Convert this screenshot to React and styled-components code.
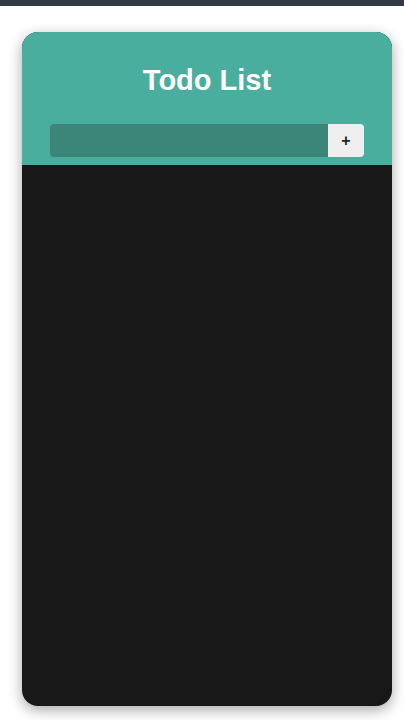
import styled, { createGlobalStyle } from 'styled-components';

const GlobalStyle = createGlobalStyle`
  html, body {
    margin: 0;
    padding: 0;
    background: #ffffff;
    font-family: "Liberation Sans", Arial, sans-serif;
  }
`

const TopBar = styled.div`
  height: 6px;
  background: #2f3a45;
`
const Page = styled.div`
  padding: 26px 12px 14px 22px;
`
const Card = styled.div`
  width: 370px;
  height: 674px;
  border-radius: 16px;
  overflow: hidden;
  background: #181818;
  box-shadow: 0 4px 14px rgba(0, 0, 0, 0.35);
  display: flex;
  flex-direction: column;
`
const Header = styled.div`
  background: #4aae9e;
  padding: 32px 28px 8px 28px;
  display: flex;
  flex-direction: column;
  align-items: center;
`
const Title = styled.h1`
  margin: 0 0 28px 0;
  color: #ffffff;
  font-size: 29px;
  font-weight: 700;
  line-height: 32px;
`
const Form = styled.form`
  display: flex;
  width: 100%;
  height: 33px;
`
const Input = styled.input`
  flex: 1;
  border: none;
  outline: none;
  background: #3c8579;
  border-radius: 4px 0 0 4px;
  color: #ffffff;
  padding: 0 10px;
  font-size: 14px;
`
const AddButton = styled.button`
  width: 36px;
  border: none;
  background: #efefef;
  border-radius: 0 4px 4px 0;
  color: #222222;
  font-size: 16px;
  font-weight: 700;
  font-family: "Liberation Sans", Arial, sans-serif;
  padding: 0;
  cursor: pointer;
`
const List = styled.ul`
  flex: 1;
  margin: 0;
  padding: 0;
  list-style: none;
`

const App = () => {
  return (
    <>
      <GlobalStyle />
      <TopBar />
      <Page>
        <Card>
          <Header>
            <Title>Todo List</Title>
            <Form onSubmit={(e) => e.preventDefault()}>
              <Input type="text" />
              <AddButton type="submit">+</AddButton>
            </Form>
          </Header>
          <List />
        </Card>
      </Page>
    </>
  )
}

export default App
